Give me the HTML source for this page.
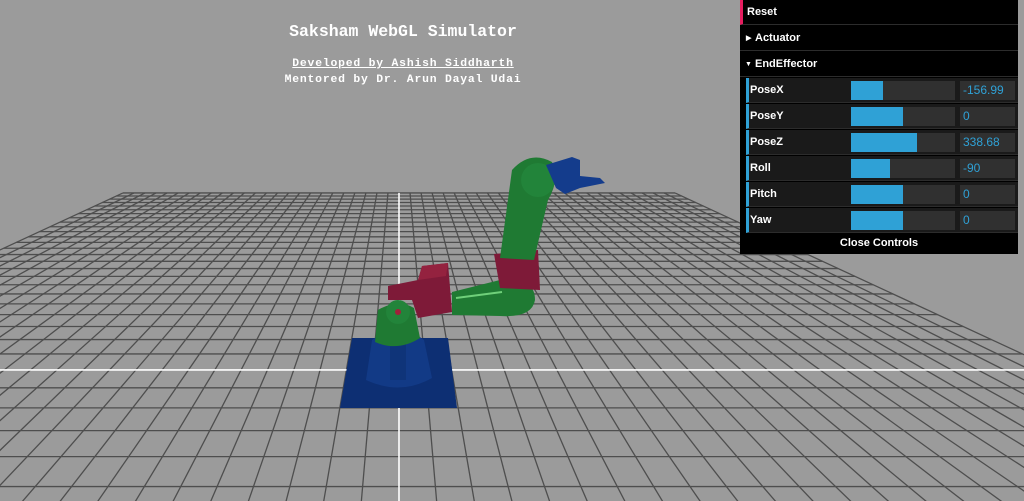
<!DOCTYPE html>
<html><head><meta charset="utf-8"><style>
html,body{margin:0;padding:0;width:1024px;height:501px;overflow:hidden;background:#9b9b9b;font-family:"Liberation Sans",sans-serif}
#scene{position:absolute;left:0;top:0}
.t{position:absolute;left:0;width:806px;text-align:center;color:#fff;font-family:"Liberation Mono",monospace;font-weight:bold;white-space:nowrap}
#panel{position:absolute;left:740px;top:0;width:278px;height:254px;background:#000;color:#fff;font-size:11px;font-weight:bold}
.row{position:absolute;left:0;width:278px;height:25px;border-bottom:1px solid #2c2c2c;line-height:25px}
.sr{position:absolute;left:6px;width:272px;height:25px;background:#1a1a1a;border-left:3px solid #2fa1d6;border-bottom:1px solid #2c2c2c;line-height:25px;box-sizing:border-box}
.sr span{position:absolute;left:1px}
.tr{position:absolute;left:102px;top:3px;width:104px;height:19px;background:#303030}
.fi{position:absolute;left:0;top:0;height:19px;background:#2fa1d6}
.bx{position:absolute;left:211px;top:3px;width:55px;height:19px;background:#303030;color:#2fa1d6;font-weight:normal;font-size:12px;line-height:19px;padding-left:3px;box-sizing:border-box}
</style></head><body>
<svg id="scene" width="1024" height="501"></svg>
<div class="t" style="top:22px;font-size:16.5px">Saksham WebGL Simulator</div>
<div class="t" style="top:58px;font-size:11.4px;letter-spacing:0.8px;text-decoration:underline">Developed by Ashish Siddharth</div>
<div class="t" style="top:74px;font-size:11.4px;letter-spacing:0.8px">Mentored by Dr. Arun Dayal Udai</div>
<div id="panel">
<div class="row" style="top:0;border-left:3px solid #e61d5f;padding-left:4px;box-sizing:border-box">Reset</div>
<div class="row" style="top:26px;padding-left:15px;box-sizing:border-box"><span style="position:absolute;left:6px;font-size:7px">▶</span>Actuator</div>
<div class="row" style="top:52px;padding-left:15px;box-sizing:border-box"><span style="position:absolute;left:5px;font-size:7px">▼</span>EndEffector</div>
<div class="sr" style="top:78px"><span>PoseX</span><div class="tr"><div class="fi" style="width:32px"></div></div><div class="bx">-156.99</div></div>
<div class="sr" style="top:104px"><span>PoseY</span><div class="tr"><div class="fi" style="width:52px"></div></div><div class="bx">0</div></div>
<div class="sr" style="top:130px"><span>PoseZ</span><div class="tr"><div class="fi" style="width:66px"></div></div><div class="bx">338.68</div></div>
<div class="sr" style="top:156px"><span>Roll</span><div class="tr"><div class="fi" style="width:39px"></div></div><div class="bx">-90</div></div>
<div class="sr" style="top:182px"><span>Pitch</span><div class="tr"><div class="fi" style="width:52px"></div></div><div class="bx">0</div></div>
<div class="sr" style="top:208px"><span>Yaw</span><div class="tr"><div class="fi" style="width:52px"></div></div><div class="bx">0</div></div>
<div style="position:absolute;top:234px;left:0;width:278px;height:20px;line-height:18px;text-align:center;font-size:11px">Close Controls</div>
</div>
<script>
var s=document.getElementById('scene'),h='';
var k=475.5,m=5510,q=65,z0=18.07,cx=399,N=25;
function P(u,v){var z=z0+v;return [cx+k*u/z,q+m/z];}
h+='<rect width="1024" height="501" fill="#9b9b9b"/>';
var vmin=-5.6;
for(var i=-N;i<=N;i++){ if(i==0)continue;
 var a=P(i,N),b=P(i,vmin);h+='<line x1="'+a[0]+'" y1="'+a[1]+'" x2="'+b[0]+'" y2="'+b[1]+'" stroke="#4e4e4e" stroke-width="1.3"/>';}
for(var j=-5;j<=N;j++){ if(j==0)continue;
 var a=P(-N,j),b=P(N,j);h+='<line x1="'+a[0]+'" y1="'+a[1]+'" x2="'+b[0]+'" y2="'+b[1]+'" stroke="#4e4e4e" stroke-width="1.3"/>';}
var a=P(0,N),b=P(0,vmin);h+='<line x1="'+a[0]+'" y1="'+a[1]+'" x2="'+b[0]+'" y2="'+b[1]+'" stroke="#fff" stroke-width="1.6"/>';
a=P(-N,0);b=P(N,0);h+='<line x1="'+a[0]+'" y1="'+a[1]+'" x2="'+b[0]+'" y2="'+b[1]+'" stroke="#fff" stroke-width="1.6"/>';
// robot
h+='<polygon points="352,338 448,338 457,408 340,408" fill="#0d2f73"/>';
h+='<path d="M366,380 L372,340 Q398,320 424,340 L432,378 Q400,396 366,380Z" fill="#123a86"/>';
h+='<rect x="390" y="340" width="16" height="40" fill="#0f3479"/>';
h+='<path d="M375,342 L378,310 Q398,298 414,308 L420,338 Q398,352 375,342Z" fill="#1f7a33"/>';
h+='<circle cx="398" cy="312" r="12" fill="#22843a"/><circle cx="398" cy="312" r="3" fill="#a0203a"/>';
h+='<polygon points="388,286 418,280 422,266 448,263 452,312 418,318 412,300 388,300" fill="#7e1a38"/>';
h+='<polygon points="418,280 422,266 448,263 446,276" fill="#94223f"/>';
h+='<path d="M452,292 L500,280 Q535,276 535,300 Q532,318 500,316 L452,315Z" fill="#1f7a33"/>';
h+='<line x1="456" y1="298" x2="502" y2="292" stroke="#6fd07a" stroke-width="2"/>';
h+='<polygon points="494,254 538,250 540,290 500,288" fill="#7e1a38"/>';
h+='<path d="M500,258 L512,170 Q530,150 552,162 Q560,180 548,200 L534,260Z" fill="#1f7a33"/>';
h+='<circle cx="538" cy="180" r="17" fill="#22843a"/>';
h+='<polygon points="546,165 572,157 580,160 580,176 600,178 605,183 580,188 565,194 556,188" fill="#143c8c"/>';
s.innerHTML=h;
</script>
</body></html>
